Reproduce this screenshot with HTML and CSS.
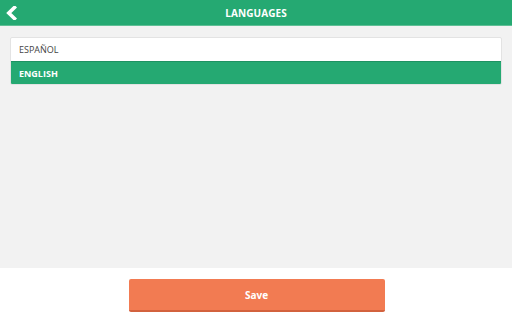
FILE: index.html
```html
<!DOCTYPE html>
<html>
<head>
<meta charset="utf-8">
<link rel="stylesheet" href="styles.css">
</head>
<body>
<div class="app">
  <header class="topbar">
    <button class="back" aria-label="Back">
      <svg width="12" height="14" viewBox="0 0 12 14"><path d="M9.5 1.5 L3.8 7 L9.5 12.5" fill="none" stroke="#fff" stroke-width="3.6" stroke-linecap="square" stroke-linejoin="miter"/></svg>
    </button>
    <h1 class="title">LANGUAGES</h1>
  </header>
  <main class="content">
    <ul class="list">
      <li class="item">ESPAÑOL</li>
      <li class="item selected">ENGLISH</li>
    </ul>
  </main>
  <footer class="footer">
    <button class="save">Save</button>
  </footer>
</div>
</body>
</html>
```
FILE: styles.css
```css
* { box-sizing: border-box; }
html, body { margin: 0; padding: 0; }
body { font-family: "Open Sans", "Liberation Sans", sans-serif; }
.app { width: 512px; height: 321px; display: flex; flex-direction: column; background: #f2f2f2; }
.topbar {
  height: 26px; background: #25a972; border-bottom: 1px solid #5fbf95;
  display: flex; align-items: center; justify-content: center; position: relative;
}
.back {
  position: absolute; left: 5px; top: 6px; padding: 0; border: 0; background: none;
  width: 12px; height: 14px; display: block;
}
.back svg { display: block; }
.title { margin: 0; color: #fff; font-size: 10px; font-weight: 700; letter-spacing: 0.1px; line-height: 24px; }
.content { flex: 1; padding: 11px 10px 0 10px; }
.list {
  list-style: none; margin: 0; padding: 0; background: #fff;
  border: 1px solid #e3e3e3; border-radius: 2px; overflow: hidden;
}
.item { height: 23px; padding-left: 8px; display: flex; align-items: center; font-size: 9px; color: #444; }
.item.selected { background: #25a972; color: #fff; font-weight: 700; border-top: 1px solid #1e9262; height: 23px; }
.footer { height: 53px; background: #fff; display: flex; justify-content: center; padding-top: 11px; }
.save {
  width: 256px; height: 33px; margin-left: 1px; background: #f27b52; border: 0; border-bottom: 2px solid #d3623e;
  border-radius: 2px; color: #fff; font-family: "Open Sans", "Liberation Sans", sans-serif;
  font-size: 10px; font-weight: 700; padding: 0;
}
```
